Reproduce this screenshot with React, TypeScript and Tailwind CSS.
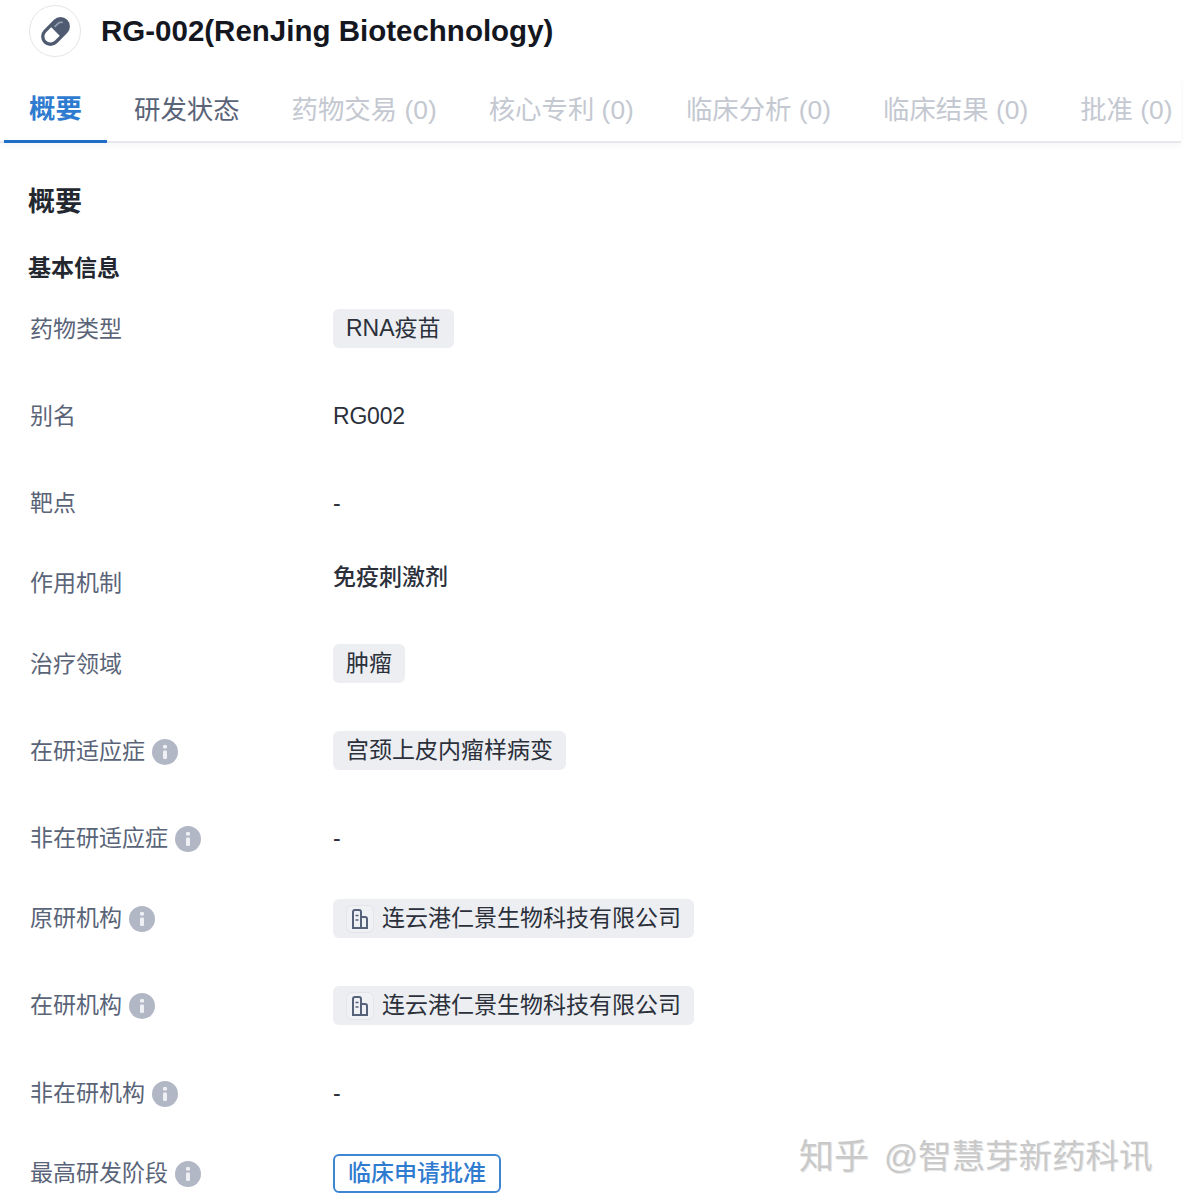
const tabs = ["研发状态", "药物交易 (0)", "核心专利 (0)", "临床分析 (0)", "临床结果 (0)", "批准 (0)"];

function InfoDot() {
  return (
    <svg viewBox="0 0 26 26" className="h-[26px] w-[26px] shrink-0">
      <circle cx="13" cy="13" r="13" fill="#b1b7c5" />
      <rect x="11" y="6" width="4" height="3.5" rx="1.2" fill="#eef0f4" />
      <rect x="11" y="11.5" width="4" height="8.5" rx="1.2" fill="#eef0f4" />
    </svg>
  );
}

function PillIcon() {
  return (
    <svg viewBox="0 0 30 30" className="h-[33px] w-[33px]">
      <g transform="rotate(-45 15 15)">
        <rect x="1.5" y="8" width="27" height="14" rx="7" fill="#fff" stroke="#4f5b70" strokeWidth="3" />
        <path d="M15 8h6.5a7 7 0 0 1 0 14H15z" fill="#4f5b70" />
        <path d="M18 11.5h4a3.5 3.5 0 0 1 3 1.8" fill="none" stroke="#9aa3b3" strokeWidth="1.5" strokeLinecap="round" />
      </g>
    </svg>
  );
}

function BuildingIcon() {
  return (
    <div className="mr-[8px] flex h-[28px] w-[28px] items-center justify-center rounded-md border border-[#e3e5ea] bg-[#f0f1f4]">
      <svg viewBox="0 0 16 20" className="h-[20px] w-[16px]" fill="none" stroke="#56627a" strokeWidth="2">
        <path d="M1 19V3a2 2 0 0 1 2-2h4a2 2 0 0 1 2 2v16z" />
        <path d="M9 8h4a2 2 0 0 1 2 2v9H9z" />
        <path d="M3.5 6.5h3M3.5 11h3" strokeWidth="1.6" />
      </svg>
    </div>
  );
}

function Tag({ children, company }: { children: string; company?: boolean }) {
  return (
    <span className={`inline-flex h-[39px] items-center rounded-md bg-[#eceef1] px-[13px] text-[23px] leading-none text-[#2b303b] ${company ? "" : "-mt-[2px]"}`}>
      {company && <BuildingIcon />}
      {children}
    </span>
  );
}

function Dash() {
  return <span className="text-[23px] leading-none text-[#2b303b]">-</span>;
}

const rows = [
  { label: "药物类型", value: <Tag>RNA疫苗</Tag>, h: "h-[87px]" },
  { label: "别名", value: <span className="text-[23px] leading-none tracking-[-0.2px] text-[#2b303b]">RG002</span>, h: "h-[87px]" },
  { label: "靶点", value: <Dash />, h: "h-[80px]" },
  { label: "作用机制", value: <span className="-mt-[12px] text-[23px] font-medium leading-none text-[#2b303b]">免疫刺激剂</span>, h: "h-[81px]" },
  { label: "治疗领域", value: <Tag>肿瘤</Tag>, h: "h-[87px]" },
  { label: "在研适应症", info: true, value: <Tag>宫颈上皮内瘤样病变</Tag>, h: "h-[87px]" },
  { label: "非在研适应症", info: true, value: <Dash />, h: "h-[80px]" },
  { label: "原研机构", info: true, value: <Tag company>连云港仁景生物科技有限公司</Tag>, h: "h-[87px]" },
  { label: "在研机构", info: true, value: <Tag company>连云港仁景生物科技有限公司</Tag>, h: "h-[88px]" },
  { label: "非在研机构", info: true, value: <Dash />, h: "h-[80px]" },
  {
    label: "最高研发阶段",
    info: true,
    value: (
      <span className="inline-flex h-[39px] items-center rounded-md border-2 border-[#3f86d2] px-[13px] text-[23px] font-medium leading-none text-[#2f7bd0]">
        临床申请批准
      </span>
    ),
    h: "h-[39px]",
  },
];

export default function App() {
  return (
    <div
      className="relative h-[1204px] w-[1184px] overflow-hidden bg-white"
      style={{ fontFamily: '"Liberation Sans", "Noto Sans CJK SC", sans-serif' }}
    >
      {/* Header */}
      <div className="flex h-[62px] items-center gap-[20px] pl-[29px]">
        <div className="flex h-[52px] w-[52px] items-center justify-center rounded-full border border-[#e3e5ea]">
          <PillIcon />
        </div>
        <h1 className="text-[29.5px] font-bold leading-none text-[#14171f]">RG-002(RenJing Biotechnology)</h1>
      </div>

      {/* Tabs */}
      <div className="mt-[14px] flex h-[67px] w-[1181px] border-b-2 border-[#e6e8ec] shadow-[0_3px_6px_rgba(0,0,0,0.04)]">
        <div className="ml-[4px] -mb-[2px] flex h-[67px] w-[103px] items-center justify-center border-b-[3px] border-[#1f6fc9] pt-[3px] text-[26.4px] font-bold text-[#2f7bd0]">
          概要
        </div>
        {tabs.map((tab, i) => (
          <div
            key={tab}
            className={`flex h-[65px] items-center whitespace-nowrap pt-[4px] text-[26.4px] ${i === 0 ? "ml-[27px] text-[#5a6478]" : "ml-[52px] text-[#c4c8d1]"}`}
          >
            {tab}
          </div>
        ))}
      </div>

      {/* Body */}
      <div className="pl-[28px] pt-[42px]">
        <h2 className="text-[27px] font-bold leading-[34px] text-[#23272f]">概要</h2>
        <h3 className="mt-[35px] text-[23px] font-bold leading-[28px] text-[#23272f]">基本信息</h3>
        <div className="mt-[28px]">
          {rows.map((row) => (
            <div key={row.label} className={`flex items-start ${row.h}`}>
              <div className="flex h-[39px] w-[305px] shrink-0 items-center gap-[7px] pl-[2px] text-[23px] leading-none text-[#5a6478]">
                {row.label}
                {row.info && <InfoDot />}
              </div>
              <div className="flex h-[39px] items-center">{row.value}</div>
            </div>
          ))}
        </div>
      </div>

      {/* Watermark */}
      <div className="absolute left-[799px] top-[1136px] flex items-center gap-[15px] whitespace-nowrap leading-[42px] text-[#c9c9c9] [text-shadow:1px_1px_0_#e8e8e8]">
        <span className="text-[35px]">知乎</span>
        <span className="text-[33.5px]">@智慧芽新药科讯</span>
      </div>
    </div>
  );
}
